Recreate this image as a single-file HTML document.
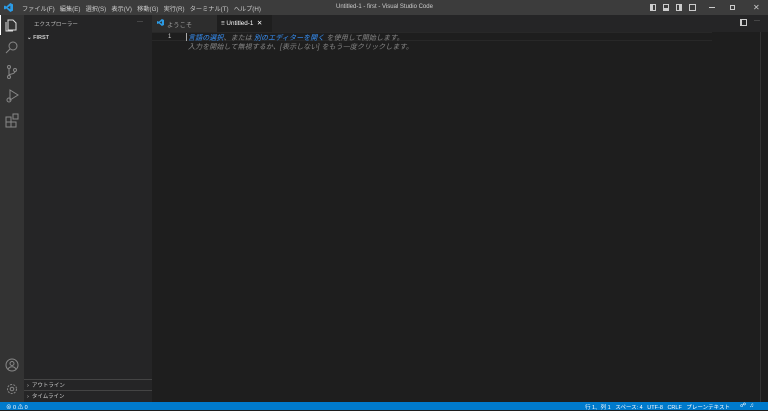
<!DOCTYPE html><html><head><meta charset="utf-8"><style>
*{margin:0;padding:0;box-sizing:border-box}
body{width:768px;height:410px;background:#1e1e1e;font-family:"Liberation Sans","Noto Sans CJK JP",sans-serif;overflow:hidden;position:relative;color:#ccc}
.a{position:absolute}
.t{font-size:6px;white-space:nowrap}
</style></head><body>
<div class="a" style="left:0;top:0;width:768px;height:15px;background:#3c3c3c"></div>
<svg class="a" style="left:4px;top:3px" width="9" height="9" viewBox="0 0 10 10"><path d="M7 0 L10 1.5 V8.5 L7 10 L2.5 6 L1 7.2 L0 6.5 V3.5 L1 2.8 L2.5 4 Z M7 3 L4 5 L7 7 Z" fill="#2b9be6"/></svg>
<div class="a t" style="left:22px;top:4px;color:#ccc;font-size:6.2px">ファイル(F)&nbsp;&nbsp;&nbsp;編集(E)&nbsp;&nbsp;&nbsp;選択(S)&nbsp;&nbsp;&nbsp;表示(V)&nbsp;&nbsp;&nbsp;移動(G)&nbsp;&nbsp;&nbsp;実行(R)&nbsp;&nbsp;&nbsp;ターミナル(T)&nbsp;&nbsp;&nbsp;ヘルプ(H)</div>
<div class="a t" style="left:336px;top:4px;color:#ccc">Untitled-1 - first - Visual Studio Code</div>
<div class="a" style="left:650px;top:4px;width:6px;height:7px;border:1px solid #ccc;border-left-width:3px"></div>
<div class="a" style="left:663px;top:4px;width:6px;height:7px;border:1px solid #ccc;border-bottom-width:3px"></div>
<div class="a" style="left:676px;top:4px;width:6px;height:7px;border:1px solid #ccc;border-right-width:3px"></div>
<div class="a" style="left:689px;top:4px;width:7px;height:7px;border:1px solid #ccc"></div>
<div class="a" style="left:709px;top:7px;width:6px;height:1px;background:#ccc"></div>
<div class="a" style="left:730px;top:5px;width:5px;height:5px;border:1px solid #ccc"></div>
<div class="a t" style="left:753px;top:3px;font-size:8px">✕</div>
<div class="a" style="left:0;top:15px;width:24px;height:387px;background:#333"></div>
<div class="a" style="left:0;top:15px;width:1px;height:20px;background:#fff"></div>
<svg class="a" style="left:5px;top:18px" width="14" height="100" viewBox="0 0 14 100" fill="none" stroke="#ddd" stroke-width="1">
<path d="M3 2h5l3 3v7H3z M1 4v9h7"/>
</svg>
<svg class="a" style="left:5px;top:18px" width="14" height="120" viewBox="0 0 14 120" fill="none" stroke="#888" stroke-width="1">
<circle cx="8" cy="28" r="4"/><path d="M5 31l-4 4"/>
<circle cx="4" cy="49" r="1.5"/><circle cx="4" cy="59" r="1.5"/><circle cx="10" cy="52" r="1.5"/><path d="M4 50.5v7M10 53.5c0 3-6 2-6 4"/>
<path d="M5 72l8 5-8 5z"/><circle cx="4" cy="82" r="2"/>
<rect x="1" y="99" width="5" height="5"/><rect x="1" y="104" width="5" height="5"/><rect x="6" y="104" width="5" height="5"/><rect x="8" y="96" width="5" height="5"/>
</svg>
<svg class="a" style="left:5px;top:358px" width="14" height="40" viewBox="0 0 14 40" fill="none" stroke="#888" stroke-width="1">
<circle cx="7" cy="7" r="6"/><circle cx="7" cy="5.5" r="2"/><path d="M3 11c2-3 6-3 8 0"/>
<circle cx="7" cy="31" r="4.5" stroke-dasharray="2 1.2"/><circle cx="7" cy="31" r="1.8"/>
</svg>
<div class="a" style="left:24px;top:15px;width:128px;height:387px;background:#252526"></div>
<div class="a t" style="left:34px;top:20px;font-size:5.5px;color:#bbb">エクスプローラー</div>
<div class="a t" style="left:137px;top:19px;color:#ccc">···</div>
<div class="a t" style="left:27px;top:35px;font-size:5.5px;color:#ccc;font-weight:bold">⌄ FIRST</div>
<div class="a" style="left:24px;top:379px;width:128px;height:1px;background:#444"></div>
<div class="a t" style="left:27px;top:381px;font-size:5.5px">›&nbsp; アウトライン</div>
<div class="a" style="left:24px;top:390px;width:128px;height:1px;background:#444"></div>
<div class="a t" style="left:27px;top:392px;font-size:5.5px">›&nbsp; タイムライン</div>
<div class="a" style="left:152px;top:15px;width:616px;height:17px;background:#252526"></div>
<div class="a" style="left:152px;top:15px;width:65px;height:17px;background:#2d2d2d"></div>
<svg class="a" style="left:157px;top:19px" width="7" height="7" viewBox="0 0 10 10"><path d="M7 0 L10 1.5 V8.5 L7 10 L2.5 6 L1 7.2 L0 6.5 V3.5 L1 2.8 L2.5 4 Z M7 3 L4 5 L7 7 Z" fill="#2b9be6"/></svg>
<div class="a t" style="left:167px;top:20px;color:#999;font-size:6.3px">ようこそ</div>
<div class="a" style="left:217px;top:15px;width:55px;height:17px;background:#1e1e1e"></div>
<div class="a t" style="left:221px;top:20px;color:#fff;font-size:6.3px">≡ Untitled-1&nbsp; ✕</div>
<div class="a" style="left:740px;top:19px;width:7px;height:7px;border:1px solid #ccc;border-left-width:2px"></div>
<div class="a t" style="left:754px;top:18px">···</div>
<div class="a" style="left:152px;top:32px;width:560px;height:9px;border-top:1px solid #282828;border-bottom:1px solid #282828"></div>
<div class="a" style="left:760px;top:32px;width:1px;height:370px;background:#333"></div>
<div class="a t" style="left:168px;top:34px;color:#ccc">1</div>
<div class="a" style="left:186px;top:33px;width:1px;height:8px;background:#aaa"></div>
<div class="a t" style="left:188px;top:33px;color:#888;font-style:italic;font-size:7px;letter-spacing:0.1px"><span style="color:#3794ff">言語の選択</span>、または <span style="color:#3794ff">別のエディターを開く</span> を使用して開始します。</div>
<div class="a t" style="left:188px;top:42px;color:#888;font-style:italic;font-size:7px;letter-spacing:0.1px">入力を開始して無視するか、[表示しない] をもう一度クリックします。</div>
<div class="a" style="left:0;top:402px;width:768px;height:8px;background:#007acc"></div>
<div class="a t" style="left:6px;top:403px;font-size:5.5px;color:#fff">⊗ 0 ⚠ 0</div>
<div class="a t" style="left:585px;top:403px;font-size:5.5px;color:#fff">行 1、列 1&nbsp;&nbsp; スペース: 4&nbsp;&nbsp; UTF-8&nbsp;&nbsp; CRLF&nbsp;&nbsp; プレーンテキスト</div>
<div class="a t" style="left:740px;top:402px;font-size:6px;color:#fff">☍&nbsp;&nbsp;♫</div>
</body></html>
